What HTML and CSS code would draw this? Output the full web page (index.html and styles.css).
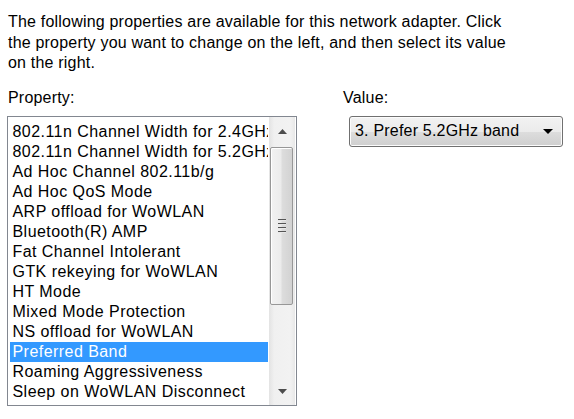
FILE: index.html
```html
<!DOCTYPE html>
<html>
<head>
<meta charset="utf-8">
<link rel="stylesheet" href="styles.css">
</head>
<body>
<div class="dialog">
  <p class="intro">The following properties are available for this network adapter. Click<br>the property you want to change on the left, and then select its value<br>on the right.</p>
  <div class="columns">
    <div class="col-left">
      <div class="label">Property:</div>
      <div class="listbox">
        <ul class="items">
          <li>802.11n Channel Width for 2.4GHz</li>
          <li>802.11n Channel Width for 5.2GHz</li>
          <li>Ad Hoc Channel 802.11b/g</li>
          <li>Ad Hoc QoS Mode</li>
          <li>ARP offload for WoWLAN</li>
          <li>Bluetooth(R) AMP</li>
          <li>Fat Channel Intolerant</li>
          <li>GTK rekeying for WoWLAN</li>
          <li>HT Mode</li>
          <li>Mixed Mode Protection</li>
          <li>NS offload for WoWLAN</li>
          <li class="selected">Preferred Band</li>
          <li>Roaming Aggressiveness</li>
          <li>Sleep on WoWLAN Disconnect</li>
        </ul>
        <div class="scrollbar">
          <div class="sb-btn sb-up"><svg width="9" height="5" viewBox="0 0 9 5"><path d="M0 5 L4.5 0 L9 5 Z" fill="#4d4d4d"/></svg></div>
          <div class="sb-thumb">
            <div class="grip"><span></span><span></span><span></span><span></span></div>
          </div>
          <div class="sb-track"></div>
          <div class="sb-btn sb-down"><svg width="9" height="5" viewBox="0 0 9 5"><path d="M0 0 L9 0 L4.5 5 Z" fill="#4d4d4d"/></svg></div>
        </div>
      </div>
    </div>
    <div class="col-right">
      <div class="label">Value:</div>
      <div class="combo">
        <span class="combo-text">3. Prefer 5.2GHz band</span>
        <svg class="combo-arrow" width="10" height="5" viewBox="0 0 10 5"><path d="M0 0 L10 0 L5 5 Z" fill="#000"/></svg>
      </div>
    </div>
  </div>
</div>
</body>
</html>
```

FILE: styles.css
```css
html, body {
  margin: 0;
  padding: 0;
  background: #ffffff;
}
body {
  font-family: "Liberation Sans", Arial, sans-serif;
  font-size: 16px;
  letter-spacing: 0.2px;
  color: #000000;
}
.dialog {
  padding-top: 12px;
  width: 574px;
}
.intro {
  margin: 0 0 0 8px;
  line-height: 20.5px;
  white-space: nowrap;
}
.columns {
  display: flex;
  margin-top: 14.5px;
}
.col-left {
  margin-left: 7px;
  width: 290px;
}
.label {
  line-height: 20.5px;
  padding-left: 1px;
  margin-bottom: 7px;
}
.listbox {
  box-sizing: border-box;
  height: 290px;
  border: 1px solid #828790;
  display: flex;
  background: #ffffff;
}
.items {
  list-style: none;
  margin: 0;
  padding: 5.7px 0 0 0;
  margin-left: 1.5px;
  width: 258px;
  overflow: hidden;
}
.items li {
  height: 20px;
  line-height: 20px;
  padding-left: 3px;
  letter-spacing: 0.45px;
  white-space: nowrap;
  overflow: hidden;
}
.items li.selected {
  background: #3399ff;
  color: #ffffff;
}
.scrollbar {
  margin-left: 1.5px;
  width: 26px;
  display: flex;
  flex-direction: column;
  background: linear-gradient(to right, #e3e3e3, #f0f0f0 20%, #f2f2f2 80%, #e8e8e8);
}
.sb-btn {
  display: flex;
  align-items: center;
  justify-content: center;
}
.sb-up {
  height: 30px;
}
.sb-down {
  height: 27px;
}
.sb-thumb {
  box-sizing: border-box;
  height: 158px;
  margin: 0 2px 0 1px;
  border: 1px solid #979797;
  border-radius: 2px;
  background: linear-gradient(to right, #f2f2f2, #ececec 45%, #dcdcdc 55%, #d2d2d2);
  box-shadow: inset 1px 1px 0 #ffffff;
  display: flex;
  align-items: center;
  justify-content: center;
}
.grip {
  display: flex;
  flex-direction: column;
  gap: 2px;
}
.grip span {
  display: block;
  width: 8px;
  height: 1px;
  background: #555555;
  border-bottom: 1px solid #e8e8e8;
}
.sb-track {
  flex: 1;
}
.col-right {
  margin-left: 46px;
}
.col-right .label {
  padding-left: 0;
}
.combo {
  box-sizing: border-box;
  margin-left: 6px;
  width: 214px;
  height: 31px;
  border: 1px solid #707070;
  border-radius: 3px;
  background: linear-gradient(to bottom, #f2f2f2 0%, #ebebeb 50%, #dddddd 51%, #cfcfcf 100%);
  box-shadow: inset 0 0 0 1px #fcfcfc;
  display: flex;
  align-items: center;
  padding-left: 5px;
  padding-right: 9px;
}
.combo-text {
  flex: 1;
  white-space: nowrap;
}
.combo-arrow {
  display: block;
}
```
